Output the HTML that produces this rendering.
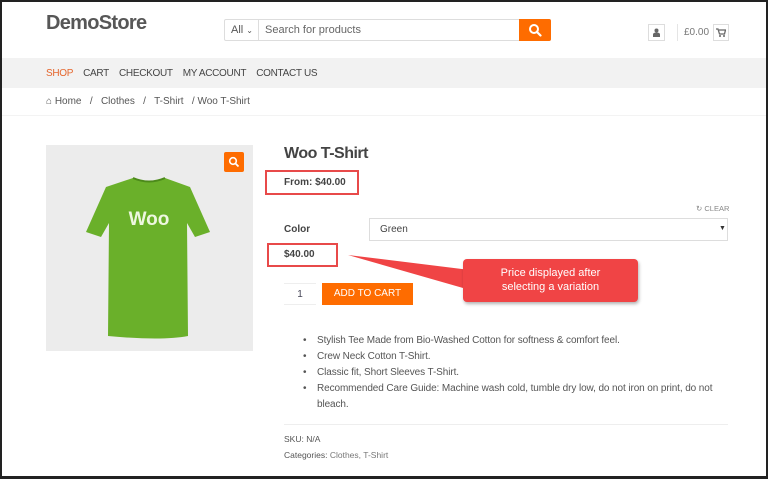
<!DOCTYPE html>
<html><head><style>
*{margin:0;padding:0;box-sizing:border-box}
body{width:768px;height:479px;overflow:hidden;background:#fff;font-family:"Liberation Sans",sans-serif;color:#555;position:relative}
.a{position:absolute}
.frame{position:absolute;left:0;top:0;width:768px;height:479px;border:2px solid #222;border-bottom-width:3px;pointer-events:none}
ul{list-style:none}
li{position:relative;padding-left:14px}
li:before{content:"\2022";position:absolute;left:0;top:0}
</style></head><body>
<div class="a" style="left:46px;top:12px;font-size:20px;font-weight:bold;color:#575757;letter-spacing:-0.7px">DemoStore</div>
<div class="a" style="left:224px;top:19px;width:327px;height:22px;border:1px solid #ddd;border-radius:2px"></div>
<div class="a" style="left:231px;top:24px;font-size:11px;color:#555">All <span style="font-size:8px">&#8964;</span></div>
<div class="a" style="left:258px;top:19px;width:1px;height:22px;background:#ddd"></div>
<div class="a" style="left:265px;top:24px;font-size:11px;color:#666">Search for products</div>
<div class="a" style="left:519px;top:19px;width:32px;height:22px;background:#fe6c00;border-radius:0 2px 2px 0"></div>
<svg class="a" style="left:528px;top:23px" width="14" height="14" viewBox="0 0 14 14"><circle cx="6" cy="6" r="4" fill="none" stroke="#fff" stroke-width="2"/><path d="M9 9l3.5 3.5" stroke="#fff" stroke-width="2.2" stroke-linecap="round"/></svg>
<div class="a" style="left:648px;top:24px;width:17px;height:17px;border:1px solid #ddd"></div>
<svg class="a" style="left:652px;top:28px" width="9" height="9" viewBox="0 0 9 9"><circle cx="4.5" cy="2.5" r="2" fill="#666"/><path d="M1 9v-2.5q0-2 3.5-2t3.5 2V9z" fill="#666"/></svg>
<div class="a" style="left:677px;top:24px;width:1px;height:17px;background:#e5e5e5"></div>
<div class="a" style="left:684px;top:27px;font-size:10px;color:#777">£0.00</div>
<div class="a" style="left:713px;top:24px;width:16px;height:17px;border:1px solid #ddd"></div>
<svg class="a" style="left:716px;top:28px" width="10" height="9" viewBox="0 0 10 9"><path d="M0 1h2l1.5 5h5l1-4H3" fill="none" stroke="#666" stroke-width="1.3"/><circle cx="4" cy="8" r="1" fill="#666"/><circle cx="8" cy="8" r="1" fill="#666"/></svg>
<div class="a" style="left:0;top:58px;width:768px;height:30px;background:#f2f2f2"></div>
<div class="a" style="left:46px;top:68px;font-size:10px;color:#444;letter-spacing:-0.3px"><span style="color:#e5662d">SHOP</span><span style="margin-left:10px">CART</span><span style="margin-left:10px">CHECKOUT</span><span style="margin-left:10px">MY ACCOUNT</span><span style="margin-left:10px">CONTACT US</span></div>
<div class="a" style="left:46px;top:96px;font-size:10px;color:#555">&#8962; Home &nbsp; / &nbsp; Clothes &nbsp; / &nbsp; T-Shirt &nbsp; / Woo T-Shirt</div>
<div class="a" style="left:0;top:115px;width:768px;height:1px;background:#f3f3f3"></div>
<div class="a" style="left:46px;top:145px;width:207px;height:206px;background:#ececec"></div>
<svg class="a" style="left:46px;top:145px" width="207" height="206" viewBox="0 0 207 206"><path d="M87 33q16 6 32 0l25 9 20 45-15 5-8-14 1 113q-26 5-80 0l1-113-8 14-15-5 20-45z" fill="#6ab02a"/><path d="M87 33q16 7 32 0" fill="none" stroke="#4c8a1a" stroke-width="2"/><text x="103" y="80" text-anchor="middle" font-family="Liberation Sans" font-weight="bold" font-size="19" fill="#eef7e0">Woo</text></svg>
<div class="a" style="left:224px;top:152px;width:20px;height:20px;background:#fe6c00;border-radius:2px"></div>
<svg class="a" style="left:228px;top:156px" width="12" height="12" viewBox="0 0 12 12"><circle cx="5" cy="5" r="3.3" fill="none" stroke="#fff" stroke-width="1.6"/><path d="M7.5 7.5l3 3" stroke="#fff" stroke-width="1.8"/></svg>
<div class="a" style="left:284px;top:145px;font-size:16px;font-weight:bold;color:#444;letter-spacing:-0.5px">Woo T-Shirt</div>
<div class="a" style="left:265px;top:170px;width:94px;height:25px;border:2px solid #e84a4a"></div>
<div class="a" style="left:284px;top:177px;font-size:10px;font-weight:bold;color:#444">From: $40.00</div>
<div class="a" style="left:696px;top:204px;font-size:7.5px;color:#888">&#8635; CLEAR</div>
<div class="a" style="left:284px;top:224px;font-size:10px;font-weight:bold;color:#444">Color</div>
<div class="a" style="left:369px;top:218px;width:359px;height:23px;border:1px solid #ddd"></div>
<div class="a" style="left:380px;top:224px;font-size:10px;color:#444">Green</div>
<div class="a" style="left:719px;top:225px;font-size:7px;color:#333">&#9660;</div>
<div class="a" style="left:267px;top:243px;width:71px;height:24px;border:2px solid #e84a4a"></div>
<div class="a" style="left:284px;top:249px;font-size:10px;font-weight:bold;color:#444">$40.00</div>
<svg class="a" style="left:340px;top:250px" width="140" height="50" viewBox="0 0 140 50"><path d="M8 5L130 20L130 40Z" fill="#f04445"/></svg>
<div class="a" style="left:463px;top:259px;width:175px;height:43px;background:#f04445;border-radius:4px;box-shadow:1px 2px 3px rgba(0,0,0,.3);color:#fff;font-size:11px;text-align:center;line-height:14px;padding-top:7px">Price displayed after<br>selecting a variation</div>
<div class="a" style="left:284px;top:283px;width:32px;height:22px;border-top:1px solid #eee;border-bottom:1px solid #eee;font-size:10px;color:#445;text-align:center;line-height:21px">1</div>
<div class="a" style="left:322px;top:283px;width:91px;height:22px;background:#fe6c00;color:#fff;font-size:10px;text-align:center;line-height:22px">ADD TO CART</div>
<ul class="a" style="left:303px;top:333px;width:430px;font-size:10px;color:#555;line-height:16px;letter-spacing:-0.1px">
<li>Stylish Tee Made from Bio-Washed Cotton for softness &amp; comfort feel.</li>
<li>Crew Neck Cotton T-Shirt.</li>
<li>Classic fit, Short Sleeves T-Shirt.</li>
<li>Recommended Care Guide: Machine wash cold, tumble dry low, do not iron on print, do not bleach.</li></ul>
<div class="a" style="left:284px;top:424px;width:444px;height:1px;background:#eee"></div>
<div class="a" style="left:284px;top:434px;font-size:8.5px;color:#555">SKU: N/A</div>
<div class="a" style="left:284px;top:450px;font-size:8.5px;color:#555">Categories: <span style="color:#777">Clothes, T-Shirt</span></div>
<div class="frame"></div>
</body></html>
